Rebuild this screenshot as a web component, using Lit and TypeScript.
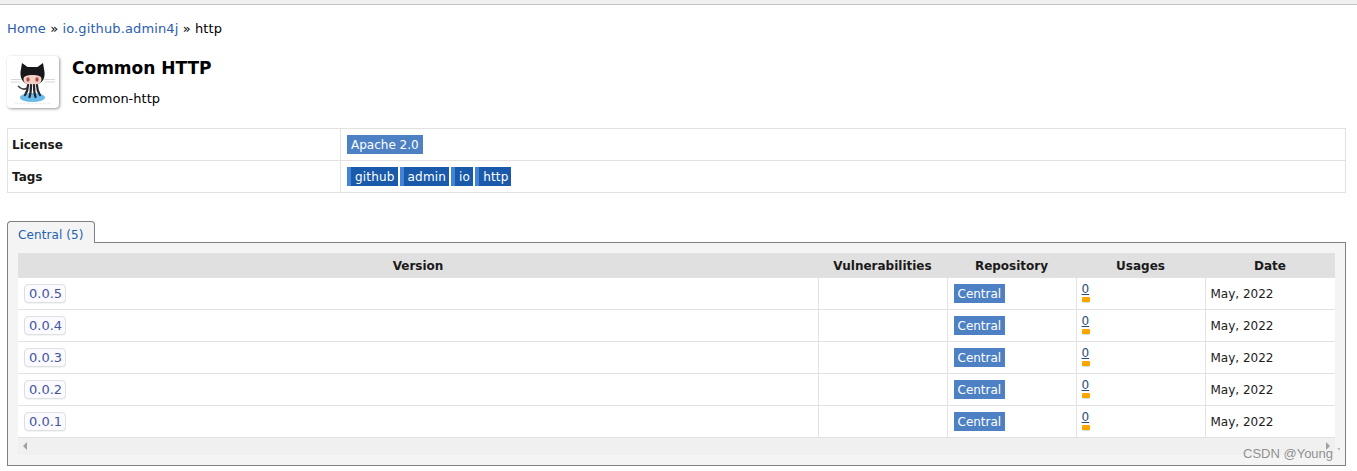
import { LitElement, html, css } from "lit";
import { customElement } from "lit/decorators.js";

const versions = ["0.0.5", "0.0.4", "0.0.3", "0.0.2", "0.0.1"];

@customElement("app-root")
export class AppRoot extends LitElement {
  static styles = css`
    :host { display: block; height: 471px; overflow: hidden; background: #fff; font-family: "DejaVu Sans", sans-serif; font-size: 13px; color: #000; position: relative; }
    * { box-sizing: border-box; }
    a { color: #2a5db0; text-decoration: none; }
    .top { height: 5px; background: #f0f0f0; border-bottom: 1px solid #c4c4c4; }
    .page { padding: 0 11px 0 7px; }
    .crumbs { height: 16px; margin-top: 16px; line-height: 16px; white-space: nowrap; letter-spacing: .12px; }
    .head { display: flex; margin-top: 19px; height: 52px; }
    .logo { width: 52px; height: 52px; border-radius: 4px; background: #fff; box-shadow: 1px 1px 3px rgba(0,0,0,.4); }
    .logo svg { display: block; filter: blur(.5px); }
    .titles { margin-left: 13px; }
    h2 { margin: 1px 0 0; font-size: 17px; line-height: 22px; font-weight: bold; }
    .sub { margin-top: 12px; line-height: 16px; }
    .info { margin-top: 20px; width: 1339px; border-collapse: collapse; table-layout: fixed; font-size: 12px; }
    .info td { height: 32px; border: 1px solid #e2e2e2; padding: 0 4px; vertical-align: middle; }
    .info td.k { width: 333px; font-weight: bold; color: #1a1a1a; }
    .info td.v { padding: 0 6px; }
    .lic, .repo { display: inline-block; height: 19px; line-height: 20px; background: #4e81c4; color: #fff; padding: 0 4px; vertical-align: middle; }
    .tags { display: flex; gap: 2px; }
    .tag { display: block; height: 19px; line-height: 20px; background: #1a5aab; border-left: 4px solid #4484d6; color: #fff; padding: 0 3px 0 4px; letter-spacing: .18px; }
    .tab { margin-top: 28px; width: 88px; height: 22px; border: 1px solid #808080; border-bottom: none; border-radius: 4px 4px 0 0; background: #f4f4f4; padding-left: 10px; line-height: 26px; position: relative; z-index: 1; margin-bottom: -1px; font-size: 12px; letter-spacing: .1px; }
    .tab a { color: #1f5fae; }
    .panel { width: 1339px; height: 224px; border: 1px solid #808080; background: #f4f4f4; padding: 10px 10px 0; }
    .ver { width: 1317px; border-collapse: collapse; table-layout: fixed; background: #fff; font-size: 12px; }
    .ver th { height: 24px; background: #e0e0e0; font-weight: bold; color: #1a1a1a; padding: 2px 0 0; text-align: center; }
    .ver td { height: 32px; border: 1px solid #e2e2e2; padding: 0 5px; vertical-align: middle; color: #222; }
    .ver td:first-child { border-left: none; padding-left: 6px; }
    .ver td:last-child { border-right: none; padding-top: 2px; }
    .ver td.uses { vertical-align: top; padding: 5px 5px 0; }
    .vlink { display: inline-block; height: 19px; line-height: 17px; padding: 0 3px 0 4px; border: 1px solid #e0e0e0; border-radius: 4px; background: #fbfbff; color: #47559f; box-shadow: 0 1px 1px rgba(0,0,0,.05); font-size: 13px; vertical-align: middle; }
    .repo { margin-left: 1px; }
    .use { display: block; }
    .use a { display: block; color: #1f4f7a; line-height: 13px; height: 14px; font-size: 12px; text-decoration: underline; }
    .use i { display: block; width: 8px; height: 5px; background: #ffa500; border-radius: 1px; box-shadow: 0 1px 1px rgba(0,0,0,.15); }
    .scroll { height: 17px; width: 1317px; background: #f0f0f0; display: flex; justify-content: space-between; align-items: center; padding: 0 5px 0 5px; }
    .arr { width: 0; height: 0; border-top: 4px solid transparent; border-bottom: 4px solid transparent; }
    .arr.l { border-right: 4px solid #a0a0a0; }
    .arr.r { border-left: 4px solid #a0a0a0; }
    .mark { position: absolute; right: 16px; top: 446px; font-family: "Liberation Sans", sans-serif; font-size: 13px; line-height: 16px; color: rgba(110,110,110,.75); white-space: nowrap; }
  `;

  private octocat() {
    return html`<svg width="52" height="52" viewBox="0 0 52 52">
      <path d="M4 23.500h10M4 26h9M37 23.500h11M38 26h10" stroke="#d8d8d8" stroke-width="1.200" fill="none"/>
      <ellipse cx="25.500" cy="41.500" rx="12.500" ry="4.500" fill="#69bbea"/>
      <path d="M20 32c-3 2-6 1-9-2" stroke="#444" stroke-width="1.700" fill="none"/>
      <path d="M15 7l5.500 4h10l5.500-4 1.500 9c1 8-4 13-12 13s-12.500-5-12-13z" fill="#17171c"/>
      <path d="M16.500 23c0-3 3.500-4 9-4s9 1 9 4c0 4-3.500 6-9 6s-9-2-9-6z" fill="#f3cfc4"/>
      <ellipse cx="21" cy="23.500" rx="1.700" ry="2.200" fill="#a8534a"/>
      <ellipse cx="30" cy="23.500" rx="1.700" ry="2.200" fill="#a8534a"/>
      <path d="M21 29c0 4-1 7-3 10M24 29c0 5-.5 9-1.500 12M27 29c0 5 .5 9 1.500 12M30 29c0 4 1 7 3 10" stroke="#24242a" stroke-width="2.200" fill="none" stroke-linecap="round"/>
      <path d="M8 47.500h36" stroke="#eee" stroke-width="1.500" stroke-dasharray="3 1" fill="none"/>
    </svg>`;
  }

  render() {
    return html`
      <div class="top"></div>
      <div class="page">
        <div class="crumbs"><a href="#">Home</a> » <a href="#">io.github.admin4j</a> » http</div>
        <div class="head">
          <div class="logo">${this.octocat()}</div>
          <div class="titles">
            <h2>Common HTTP</h2>
            <div class="sub">common-http</div>
          </div>
        </div>
        <table class="info">
          <tr><td class="k">License</td><td class="v"><span class="lic">Apache 2.0</span></td></tr>
          <tr><td class="k">Tags</td><td class="v"><div class="tags">${["github", "admin", "io", "http"].map(t => html`<a class="tag" href="#">${t}</a>`)}</div></td></tr>
        </table>
        <div class="tab"><a href="#">Central (5)</a></div>
        <div class="panel">
          <table class="ver">
            <colgroup><col style="width:800px"><col style="width:129px"><col style="width:129px"><col style="width:129px"><col style="width:130px"></colgroup>
            <tr><th>Version</th><th>Vulnerabilities</th><th>Repository</th><th>Usages</th><th>Date</th></tr>
            ${versions.map(v => html`<tr>
              <td><a class="vlink" href="#">${v}</a></td>
              <td></td>
              <td><span class="repo">Central</span></td>
              <td class="uses"><div class="use"><a href="#">0</a><i></i></div></td>
              <td>May, 2022</td>
            </tr>`)}
          </table>
          <div class="scroll"><span class="arr l"></span><span class="arr r"></span></div>
        </div>
      </div>
      <div class="mark">CSDN @Young ˋ</div>
    `;
  }
}
